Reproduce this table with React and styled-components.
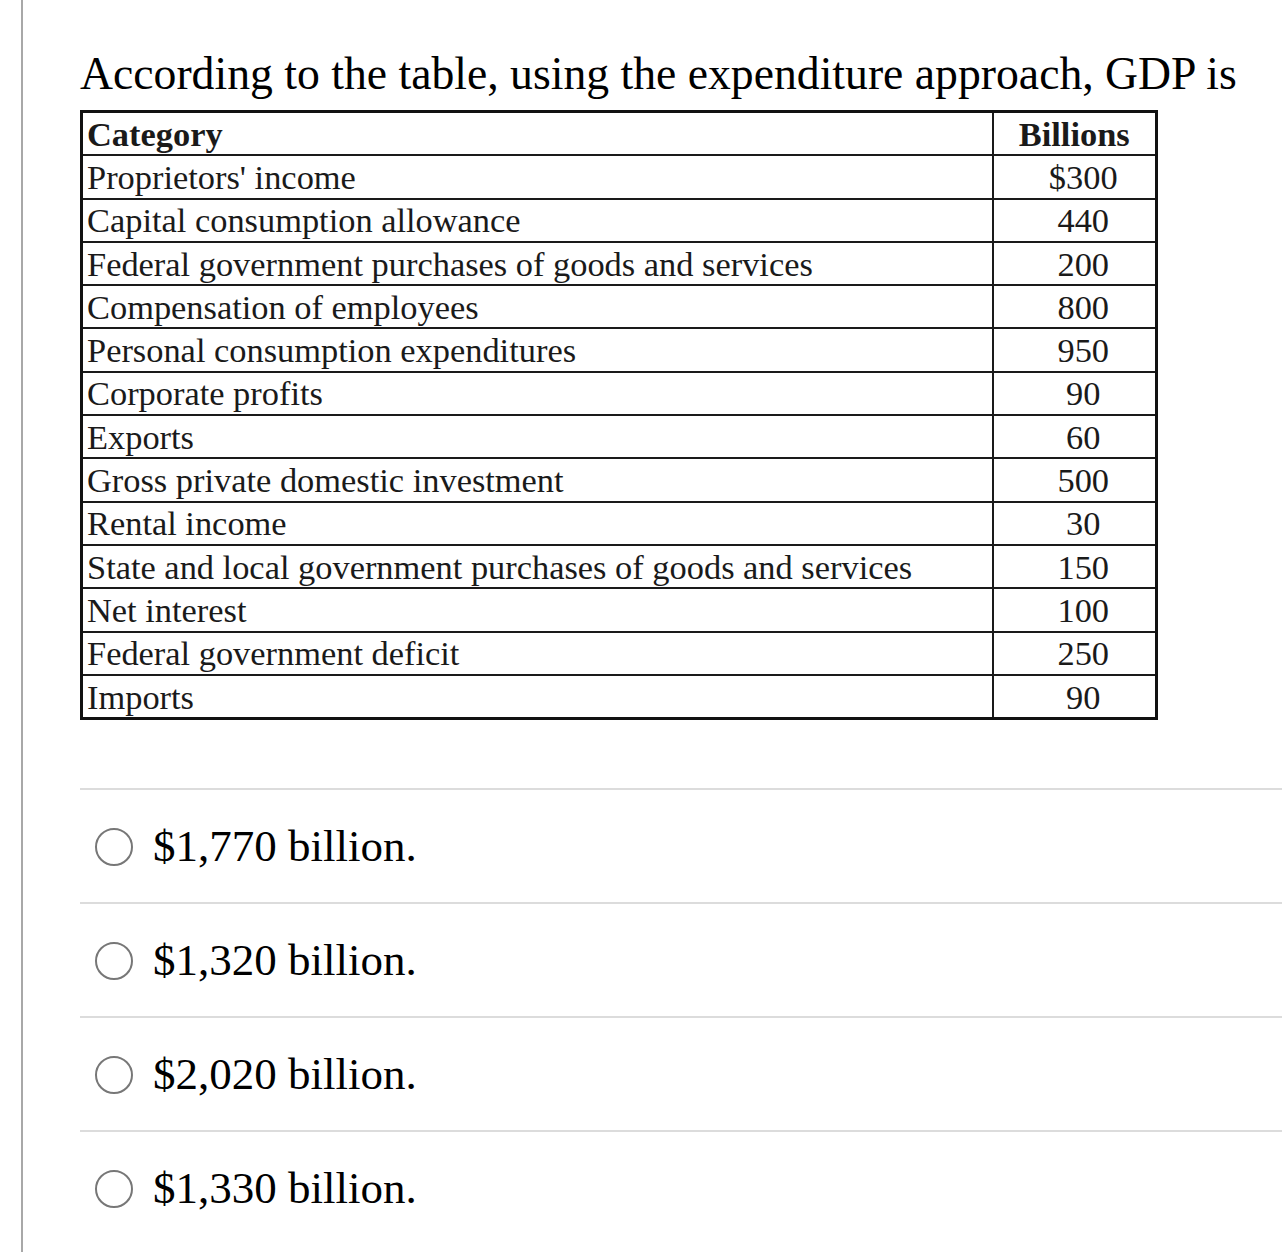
import React from 'react';
import styled, { createGlobalStyle } from 'styled-components';

const GlobalStyle = createGlobalStyle`
  html, body {
    margin: 0;
    padding: 0;
    background: #fff;
  }
  body {
    font-family: "Liberation Serif", "Times New Roman", serif;
    color: #000;
  }
`;

const Page = styled.div`
  display: flex;
  width: 1282px;
  min-height: 1252px;
  padding-left: 21px;
  box-sizing: border-box;
`;

const Rail = styled.div`
  width: 2px;
  background: #a8a8a8;
  flex-shrink: 0;
`;

const Content = styled.div`
  flex: 1;
  padding-left: 57px;
  padding-top: 49px;
`;

const Question = styled.div`
  font-size: 45.7px;
  line-height: 50px;
  white-space: nowrap;
  margin-bottom: 11px;
`;

const Table = styled.table`
  border-collapse: collapse;
  table-layout: fixed;
  width: 1075px;
  border: 3px solid #111;
  font-family: "Liberation Serif", "Times New Roman", serif;
  font-size: 34.4px;
  color: #1a1a1a;
`;

const Cell = styled.td`
  border: 2px solid #1a1a1a;
  height: 41.3px;
  padding: 0 4px;
  line-height: 36px;
  vertical-align: middle;
  white-space: nowrap;
  font-weight: ${p => (p.$head ? 700 : 400)};
  text-align: ${p => (p.$num ? 'center' : 'left')};
  ${p => p.$num && `padding-left: ${p.$head ? 0 : 18}px; padding-right: 0;`}
`;

const Options = styled.div`
  margin-top: 68px;
`;

const Option = styled.label`
  display: flex;
  align-items: center;
  height: 112px;
  border-top: 2px solid #dcdcdc;
  padding-left: 15px;
  font-size: 45px;
  cursor: pointer;
`;

const Radio = styled.span`
  width: 34px;
  height: 34px;
  border: 2px solid #777;
  border-radius: 50%;
  flex-shrink: 0;
  margin-right: 20px;
  margin-top: 2px;
`;

const rows = [
  ["Proprietors' income", '$300'],
  ['Capital consumption allowance', '440'],
  ['Federal government purchases of goods and services', '200'],
  ['Compensation of employees', '800'],
  ['Personal consumption expenditures', '950'],
  ['Corporate profits', '90'],
  ['Exports', '60'],
  ['Gross private domestic investment', '500'],
  ['Rental income', '30'],
  ['State and local government purchases of goods and services', '150'],
  ['Net interest', '100'],
  ['Federal government deficit', '250'],
  ['Imports', '90'],
];

const answers = ['$1,770 billion.', '$1,320 billion.', '$2,020 billion.', '$1,330 billion.'];

export default function App() {
  return (
    <>
      <GlobalStyle />
      <Page>
        <Rail />
        <Content>
          <Question>According to the table, using the expenditure approach, GDP is</Question>
          <Table>
            <colgroup>
              <col style={{ width: 911 }} />
              <col style={{ width: 164 }} />
            </colgroup>
            <tbody>
              <tr>
                <Cell $head>Category</Cell>
                <Cell $head $num>Billions</Cell>
              </tr>
              {rows.map(([name, value]) => (
                <tr key={name}>
                  <Cell>{name}</Cell>
                  <Cell $num>{value}</Cell>
                </tr>
              ))}
            </tbody>
          </Table>
          <Options>
            {answers.map(a => (
              <Option key={a}>
                <Radio />
                {a}
              </Option>
            ))}
          </Options>
        </Content>
      </Page>
    </>
  );
}
